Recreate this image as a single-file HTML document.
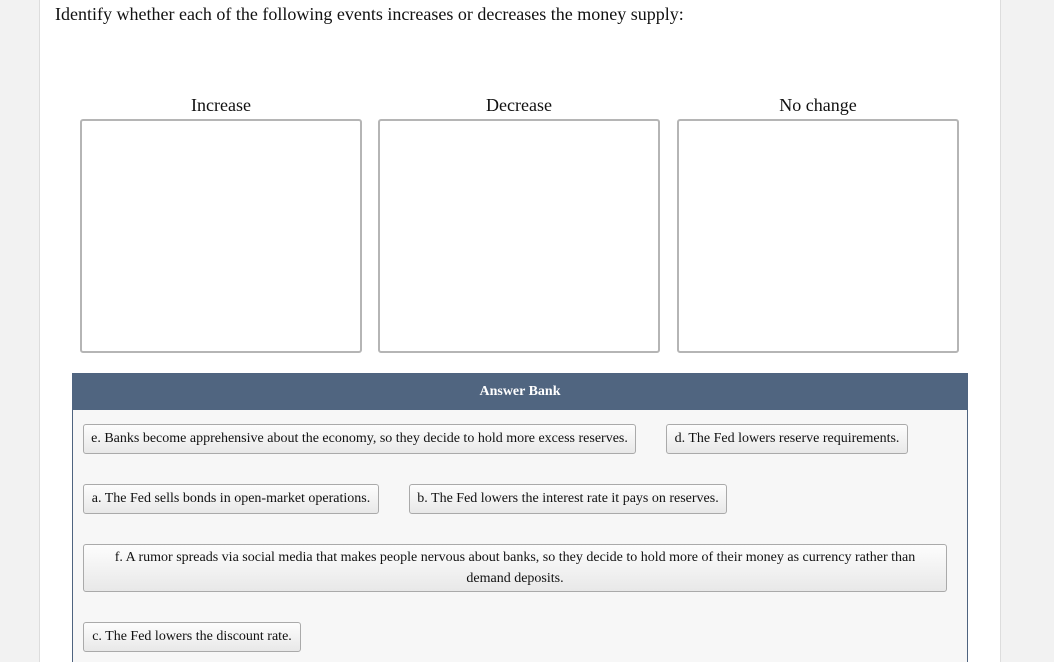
<!DOCTYPE html>
<html><head><meta charset="utf-8"><style>
*{box-sizing:border-box;margin:0;padding:0}
html,body{width:1054px;height:662px;overflow:hidden}
body{background:#f2f2f2;font-family:"Liberation Serif",serif;color:#111;position:relative}
.page{position:absolute;left:39px;top:0;width:962px;height:662px;background:#fff;border-left:1px solid #ddd;border-right:1px solid #ddd}
.q{position:absolute;left:55px;top:4px;font-size:18px}
.lbl{position:absolute;top:95px;font-size:18px;text-align:center;width:282px}
.box{position:absolute;top:119px;width:282px;height:234px;border:2px solid #b5b5b5;border-radius:3px;background:#fff}
.bank{position:absolute;left:72px;top:373px;width:896px;height:300px;background:#f7f7f7;border:1px solid #4f6480}
.bh{height:36px;background:#506580;color:#fff;font-weight:bold;font-size:14px;text-align:center;line-height:36px}
.b{position:absolute;border:1px solid #aaa;border-radius:3px;background:linear-gradient(#fdfdfd,#e8e8e8);font-size:14px;text-align:center;line-height:21px;padding:3px 4px;height:30px;white-space:nowrap}
</style></head><body>
<div class="page"></div>
<div class="q">Identify whether each of the following events increases or decreases the money supply:</div>
<div class="lbl" style="left:80px">Increase</div>
<div class="lbl" style="left:378px">Decrease</div>
<div class="lbl" style="left:677px">No change</div>
<div class="box" style="left:80px"></div>
<div class="box" style="left:378px"></div>
<div class="box" style="left:677px"></div>
<div class="bank"><div class="bh">Answer Bank</div></div>
<div class="b" style="left:83px;top:424px;width:553px">e. Banks become apprehensive about the economy, so they decide to hold more excess reserves.</div>
<div class="b" style="left:666px;top:424px;width:242px">d. The Fed lowers reserve requirements.</div>
<div class="b" style="left:83px;top:484px;width:296px">a. The Fed sells bonds in open-market operations.</div>
<div class="b" style="left:409px;top:484px;width:318px">b. The Fed lowers the interest rate it pays on reserves.</div>
<div class="b" style="left:83px;top:544px;width:864px;height:48px;padding:2px 8px;white-space:normal">f. A rumor spreads via social media that makes people nervous about banks, so they decide to hold more of their money as currency rather than<br>demand deposits.</div>
<div class="b" style="left:83px;top:622px;width:218px">c. The Fed lowers the discount rate.</div>
</body></html>
